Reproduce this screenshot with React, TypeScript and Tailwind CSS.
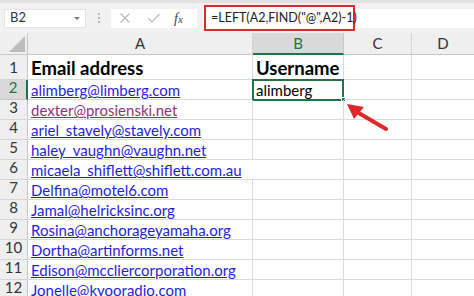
import React from 'react';

const font = { fontFamily: 'Lato, "Open Sans", sans-serif' };

const emails = [
  'alimberg@limberg.com',
  'dexter@prosienski.net',
  'ariel_stavely@stavely.com',
  'haley_vaughn@vaughn.net',
  'micaela_shiflett@shiflett.com.au',
  'Delfina@motel6.com',
  'Jamal@helricksinc.org',
  'Rosina@anchorageyamaha.org',
  'Dortha@artinforms.net',
  'Edison@mccliercorporation.org',
  'Jonelle@kyooradio.com',
];

const Toolbar = () => (
  <div className="h-[33px] bg-[#f1f1f1] border-t-[3px] border-[#e2e2e2] flex items-center relative">
    {/* name box */}
    <div className="ml-[4px] w-[82px] h-[19px] bg-white border border-[#e3e3e3] flex items-center justify-between px-[5px]">
      <span className="text-[13px] text-[#333]">B2</span>
      <span className="w-0 h-0 border-l-[3px] border-r-[3px] border-t-[3px] border-l-transparent border-r-transparent border-t-[#777]" />
    </div>
    {/* grip dots */}
    <div className="ml-[12px] flex flex-col gap-[2px]">
      <span className="w-[2px] h-[2px] bg-[#b5b5b5]" />
      <span className="w-[2px] h-[2px] bg-[#b5b5b5]" />
      <span className="w-[2px] h-[2px] bg-[#b5b5b5]" />
    </div>
    {/* cancel / enter / fx */}
    <div className="ml-[11px] w-[86px] h-[19px] bg-white flex items-center">
      <svg width="12" height="12" viewBox="0 0 12 12" className="ml-[8px]">
        <path d="M1.5 1.5 L10.5 10.5 M10.5 1.5 L1.5 10.5" stroke="#b9b9b9" strokeWidth="1.2" />
      </svg>
      <svg width="14" height="12" viewBox="0 0 14 12" className="ml-[16px]">
        <path d="M1.5 6.5 L5 10 L12.5 2" stroke="#b9b9b9" strokeWidth="1.2" fill="none" />
      </svg>
      <span
        className="ml-[13px] text-[14px] italic text-[#444]"
        style={{ fontFamily: '"Liberation Serif", serif' }}
      >
        f<span className="text-[11px]">x</span>
      </span>
    </div>
    {/* formula bar */}
    <div className="ml-[6px] flex-1 h-[19px] bg-white" />
    <div className="absolute left-[204px] top-[2px] w-[151px] h-[26px] border-[2.5px] border-[#e3262a] bg-white flex items-center pl-[5px]">
      <span className="text-[12.5px] text-[#222]">=LEFT(A2,FIND("@",A2)-1)</span>
    </div>
  </div>
);

const HeaderRow = () => (
  <div className="flex h-[22px] bg-[#efefef] border-b border-[#c6c6c6] text-[15px] text-[#333]">
    <div className="w-[28px] border-r border-[#c6c6c6] relative">
      <svg width="16" height="16" viewBox="0 0 16 16" className="absolute right-[2px] bottom-[2px]">
        <path d="M16 0 L16 16 L0 16 Z" fill="#bdbdbd" />
      </svg>
    </div>
    <div className="w-[225px] border-r border-[#d4d4d4] flex items-center justify-center">A</div>
    <div className="w-[91px] bg-[#d9d9d9] border-r border-[#c6c6c6] border-b-2 border-b-[#217346] -mb-px flex items-center justify-center text-[#217346]">
      B
    </div>
    <div className="w-[68px] border-r border-[#d4d4d4] flex items-center justify-center">C</div>
    <div className="flex-1 flex items-center justify-center">D</div>
  </div>
);

const RowNum = ({ n, active }: { n: number; active?: boolean }) => (
  <div
    className={
      'w-[28px] shrink-0 flex items-end justify-center pb-[1px] text-[15px] border-b ' +
      (active
        ? 'bg-[#d9d9d9] text-[#217346] border-[#c6c6c6] border-r-2 border-r-[#217346]'
        : 'bg-[#efefef] text-[#333] border-[#d4d4d4] border-r border-r-[#c6c6c6]')
    }
  >
    {n}
  </div>
);

const Cell = ({ w, children, noRight }: { w: string; children?: React.ReactNode; noRight?: boolean }) => (
  <div
    className={
      w + ' shrink-0 border-b border-[#dadada] flex items-end pl-[3px] pb-[1px] whitespace-nowrap overflow-visible relative ' +
      (noRight ? '' : 'border-r')
    }
  >
    {children}
  </div>
);

export default function App() {
  return (
    <div className="w-[474px] h-[296px] overflow-hidden bg-white relative" style={font}>
      <Toolbar />
      <HeaderRow />

      {/* row 1 */}
      <div className="flex h-[25px]">
        <RowNum n={1} />
        <Cell w="w-[225px]">
          <span className="text-[18.5px] font-bold text-black leading-none mb-[1px]">Email address</span>
        </Cell>
        <Cell w="w-[91px]">
          <span className="text-[18.5px] font-bold text-black leading-none mb-[1px]">Username</span>
        </Cell>
        <Cell w="w-[68px]" />
        <Cell w="flex-1" noRight />
      </div>

      {emails.map((email, i) => {
        const n = i + 2;
        return (
          <div key={n} className="flex h-[20px]">
            <RowNum n={n} active={n === 2} />
            <Cell w="w-[225px]" noRight={n === 6}>
              <span
                className={
                  'text-[15px] underline leading-none z-10 ' +
                  (n === 3 ? 'text-[#8e3383]' : 'text-[#1f1fd6]')
                }
              >
                {email}
              </span>
            </Cell>
            <Cell w="w-[91px]">
              {n === 2 && (
                <>
                  <div className="absolute -left-[1px] -top-[1px] w-[92px] h-[22px] border-2 border-[#217346] pointer-events-none" />
                  <div className="absolute -right-[3px] -bottom-[3px] w-[5px] h-[5px] bg-[#217346] border border-white" />
                  <span className="text-[15px] text-black leading-none">alimberg</span>
                </>
              )}
            </Cell>
            <Cell w="w-[68px]" />
            <Cell w="flex-1" noRight />
          </div>
        );
      })}

      {/* red arrow pointing at the fill handle */}
      <svg
        width="60"
        height="50"
        viewBox="0 0 60 50"
        className="absolute left-[340px] top-[96px]"
      >
        <path d="M46 33 L17 16" stroke="#e3262a" strokeWidth="4" strokeLinecap="round" />
        <path d="M7 8 L24 11 L14 23 Z" fill="#e3262a" />
      </svg>
    </div>
  );
}
